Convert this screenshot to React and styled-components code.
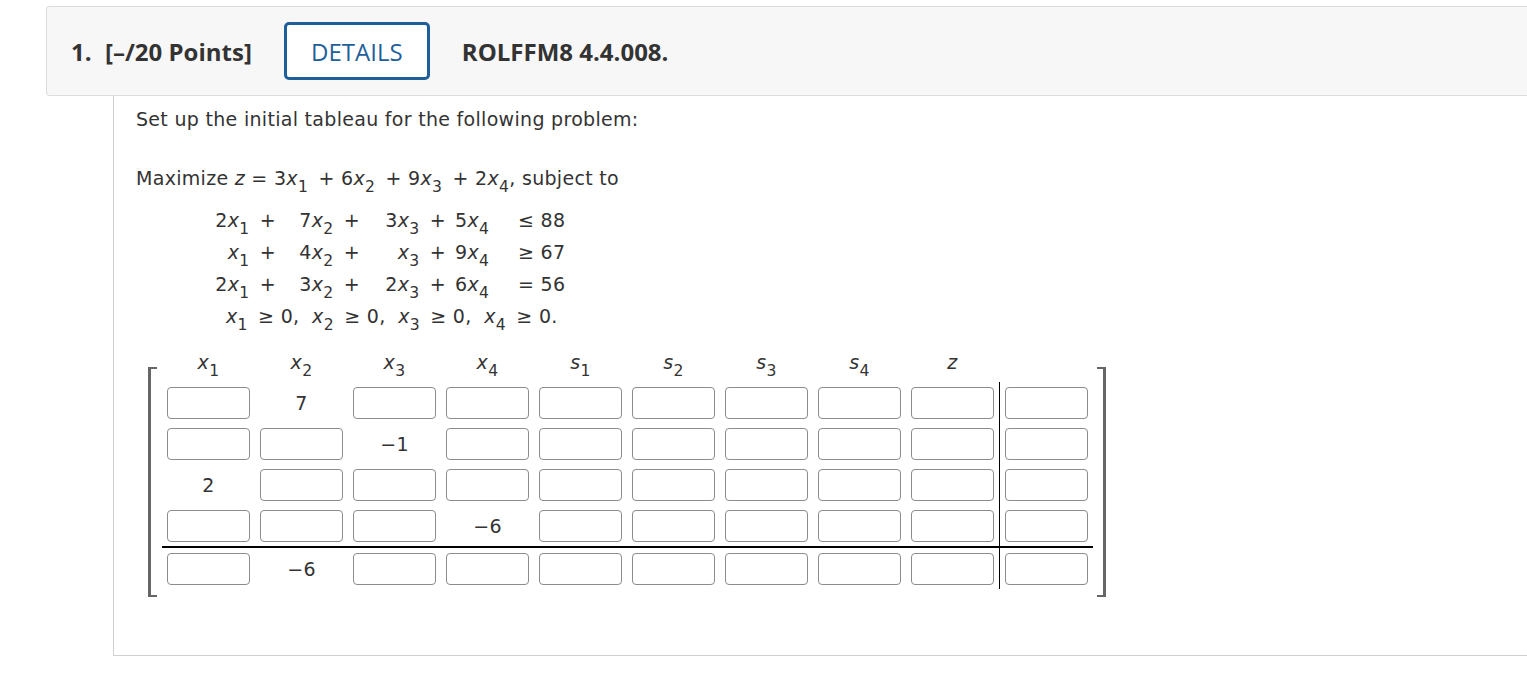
import React from 'react';
import styled, { createGlobalStyle } from 'styled-components';

const GlobalStyle = createGlobalStyle`
  html, body {
    margin: 0;
    padding: 0;
    background: #fff;
    overflow: hidden;
  }
  body {
    font-family: "DejaVu Sans", Verdana, sans-serif;
    color: #333;
  }
`;

const Page = styled.div`
  padding: 6px 0 0 46px;
  width: 1560px;
`;

const QuestionHeader = styled.div`
  display: flex;
  align-items: center;
  height: 88px;
  background: #f7f7f7;
  border: 1px solid #dcdcdc;
  border-radius: 3px;
  padding-left: 24px;
  font-family: "Open Sans", sans-serif;
  font-size: 24px;
  color: #333;
`;

const Number = styled.span`
  font-weight: 700;
  width: 34px;
`;

const Points = styled.span`
  font-weight: 700;
`;

const DetailsButton = styled.button`
  margin: 0 32px;
  width: 146px;
  height: 58px;
  padding: 0;
  border: 3px solid #1f5f99;
  border-radius: 5px;
  background: #fff;
  color: #1f5f99;
  font-family: "Open Sans", sans-serif;
  font-size: 24px;
  font-weight: 500;
  cursor: pointer;
`;

const Reference = styled.span`
  font-weight: 700;
`;

const QuestionBody = styled.div`
  margin-left: 67px;
  border-left: 1px solid #cfcfcf;
  border-bottom: 1px solid #cfcfcf;
  padding: 9px 0 58px 22px;
  font-size: 19px;
  line-height: 28px;
  letter-spacing: 0.3px;
`;

const Para = styled.p`
  margin: ${(p) => p.$top || 0}px 0 0;
`;

const Var = styled.i`
  font-style: italic;
`;

const Sub = styled.sub`
  font-size: 0.82em;
  line-height: 0;
  vertical-align: -0.45em;
  margin-right: ${(p) => (p.$tight ? 0 : 4)}px;
`;

const Constraints = styled.div`
  display: grid;
  grid-template-columns: 76px 84px 86px 64px auto;
  grid-auto-rows: 32px;
  line-height: 32px;
  margin: 12px 0 0 64px;
  width: max-content;
`;

const Term = styled.span`
  text-align: ${(p) => (p.$left ? 'left' : 'right')};
  padding-left: ${(p) => (p.$left ? 9 : 0)}px;
  white-space: pre;
`;

const Relation = styled.span`
  padding-left: 8px;
  white-space: pre;
`;

const Bounds = styled.span`
  grid-column: 1 / -1;
  padding-left: 26px;
  white-space: pre;
`;

const Matrix = styled.div`
  display: flex;
  align-items: flex-start;
  margin: 16px 0 0 12px;
`;

const Bracket = styled.div`
  width: 6px;
  height: 226px;
  margin-top: 19px;
  border-top: 2px solid #666;
  border-bottom: 2px solid #666;
  ${(p) => (p.$right ? 'border-right: 3px solid #666; margin-left: 4px;' : 'border-left: 3px solid #666; margin-right: 5px;')}
`;

const Tableau = styled.div`
  display: flex;
  flex-direction: column;
`;

const Row = styled.div`
  display: flex;
  ${(p) => p.$divider && 'border-bottom: 2px solid #000;'}
`;

const HeadCell = styled.div`
  width: 93px;
  height: 34px;
  line-height: 28px;
  text-align: center;
  ${(p) => p.$rhs && 'margin-left: 1px;'}
`;

const Cell = styled.div`
  width: 93px;
  padding: 5px 0 4px;
  display: flex;
  justify-content: center;
  ${(p) => p.$rhs && 'border-left: 1px solid #000;'}
`;

const Box = styled.input`
  box-sizing: border-box;
  width: 83px;
  height: 32px;
  margin: 0;
  border: 1px solid #8c8c8c;
  border-radius: 4px;
  background: #fff;
`;

const Given = styled.div`
  height: 32px;
  line-height: 32px;
`;

const X = ({ n, tight }) => (
  <>
    <Var>x</Var>
    <Sub $tight={tight}>{n}</Sub>
  </>
);

const columns = [
  ['x', 1], ['x', 2], ['x', 3], ['x', 4],
  ['s', 1], ['s', 2], ['s', 3], ['s', 4],
  ['z', null], [null, null],
];

const rows = [
  [null, '7', null, null, null, null, null, null, null, null],
  [null, null, '\u22121', null, null, null, null, null, null, null],
  ['2', null, null, null, null, null, null, null, null, null],
  [null, null, null, '\u22126', null, null, null, null, null, null],
  [null, '\u22126', null, null, null, null, null, null, null, null],
];

const constraints = [
  [['2', 1, ' +'], ['7', 2, ' +'], ['3', 3, ' +'], ['5', 4, ''], '\u2264 88'],
  [['', 1, ' +'], ['4', 2, ' +'], ['', 3, ' +'], ['9', 4, ''], '\u2265 67'],
  [['2', 1, ' +'], ['3', 2, ' +'], ['2', 3, ' +'], ['6', 4, ''], '= 56'],
];

export default function App() {
  return (
    <Page>
      <GlobalStyle />
      <QuestionHeader>
        <Number>1.</Number>
        <Points>[–/20 Points]</Points>
        <DetailsButton>DETAILS</DetailsButton>
        <Reference>ROLFFM8 4.4.008.</Reference>
      </QuestionHeader>

      <QuestionBody>
        <Para>Set up the initial tableau for the following problem:</Para>
        <Para $top={31}>
          Maximize <Var>z</Var> = 3<X n={1} /> + 6<X n={2} /> + 9<X n={3} /> + 2<X n={4} tight />, subject to
        </Para>

        <Constraints>
          {constraints.map((row, i) => (
            <React.Fragment key={i}>
              {row.slice(0, 4).map(([coef, n, op], j) => (
                <Term key={j} $left={j === 3}>
                  {coef}
                  <X n={n} tight={!op} />
                  {op}
                </Term>
              ))}
              <Relation>{row[4]}</Relation>
            </React.Fragment>
          ))}
          <Bounds>
            <X n={1} /> ≥ 0,  <X n={2} /> ≥ 0,  <X n={3} /> ≥ 0,  <X n={4} /> ≥ 0.
          </Bounds>
        </Constraints>

        <Matrix>
          <Bracket />
          <Tableau>
            <Row>
              {columns.map(([v, n], i) => (
                <HeadCell key={i} $rhs={i === 9}>
                  {v && <Var>{v}</Var>}
                  {n && <Sub $tight>{n}</Sub>}
                </HeadCell>
              ))}
            </Row>
            {rows.map((cells, r) => (
              <Row key={r} $divider={r === 3}>
                {cells.map((val, c) => (
                  <Cell key={c} $rhs={c === 9}>
                    {val ? <Given>{val}</Given> : <Box type="text" />}
                  </Cell>
                ))}
              </Row>
            ))}
          </Tableau>
          <Bracket $right />
        </Matrix>
      </QuestionBody>
    </Page>
  );
}
